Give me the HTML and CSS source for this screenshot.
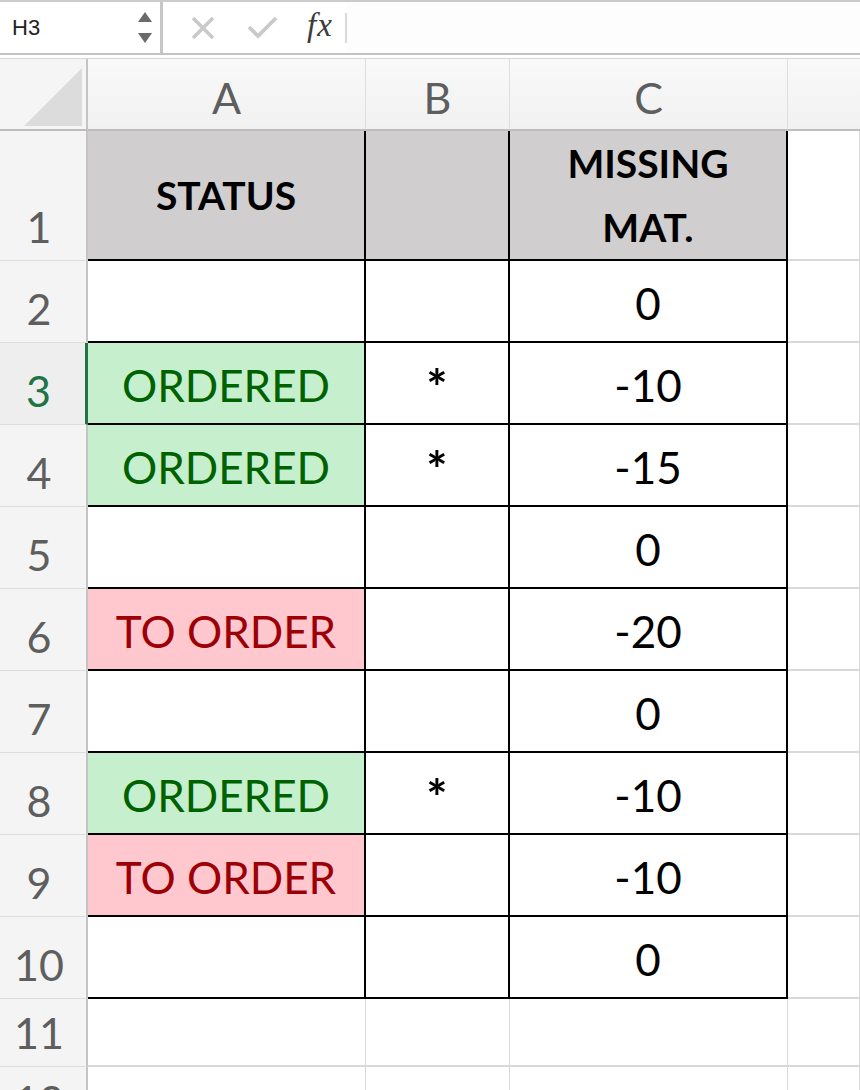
FILE: index.html
```html
<!DOCTYPE html>
<html>
<head>
<meta charset="utf-8">
<link rel="stylesheet" href="styles.css">
</head>
<body>
<div class="fbar">
  <div class="namebox">
    <span class="ref">H3</span>
    <svg class="spin" width="16" height="51" viewBox="0 0 16 51"><polygon points="1,20 15,20 8,10" fill="#6a6a6a"/><polygon points="1,31 15,31 8,41" fill="#6a6a6a"/></svg>
  </div>
  <div class="fbtns">
    <svg class="ico-x" width="24" height="24" viewBox="0 0 24 24"><path d="M2 2 L22 22 M22 2 L2 22" stroke="#c9c9c9" stroke-width="3.6" fill="none"/></svg>
    <svg class="ico-ok" width="31" height="23" viewBox="0 0 31 23"><path d="M2 11 L11 20 L29 2" stroke="#c9c9c9" stroke-width="3.8" fill="none"/></svg>
    <span class="fx">fx</span>
    <span class="fsep"></span>
  </div>
  <div class="finput"></div>
</div>
<div class="sheet">
  <div class="corner"><svg width="86" height="72" viewBox="0 0 86 72"><polygon points="24,67 82,67 82,9" fill="#dcdcdc"/></svg></div>
  <div class="ch">A</div>
  <div class="ch">B</div>
  <div class="ch">C</div>
  <div class="ch last"></div>

  <div class="rh">1</div>
  <div class="c t hd">STATUS</div>
  <div class="c t hd"></div>
  <div class="c t hd">MISSING<br>MAT.</div>
  <div class="c g"></div>

  <div class="rh">2</div>
  <div class="c t"></div>
  <div class="c t"></div>
  <div class="c t">0</div>
  <div class="c g"></div>

  <div class="rh sel">3</div>
  <div class="c t ok">ORDERED</div>
  <div class="c t star">*</div>
  <div class="c t">-10</div>
  <div class="c g"></div>

  <div class="rh">4</div>
  <div class="c t ok">ORDERED</div>
  <div class="c t star">*</div>
  <div class="c t">-15</div>
  <div class="c g"></div>

  <div class="rh">5</div>
  <div class="c t"></div>
  <div class="c t"></div>
  <div class="c t">0</div>
  <div class="c g"></div>

  <div class="rh">6</div>
  <div class="c t no">TO ORDER</div>
  <div class="c t"></div>
  <div class="c t">-20</div>
  <div class="c g"></div>

  <div class="rh">7</div>
  <div class="c t"></div>
  <div class="c t"></div>
  <div class="c t">0</div>
  <div class="c g"></div>

  <div class="rh">8</div>
  <div class="c t ok">ORDERED</div>
  <div class="c t star">*</div>
  <div class="c t">-10</div>
  <div class="c g"></div>

  <div class="rh">9</div>
  <div class="c t no">TO ORDER</div>
  <div class="c t"></div>
  <div class="c t">-10</div>
  <div class="c g"></div>

  <div class="rh">10</div>
  <div class="c t"></div>
  <div class="c t"></div>
  <div class="c t">0</div>
  <div class="c g"></div>

  <div class="rh">11</div>
  <div class="c g"></div>
  <div class="c g"></div>
  <div class="c g"></div>
  <div class="c g"></div>

  <div class="rh">12</div>
  <div class="c g"></div>
  <div class="c g"></div>
  <div class="c g"></div>
  <div class="c g"></div>
</div>
</body>
</html>
```
FILE: styles.css
```css
html, body {
  margin: 0;
  padding: 0;
  width: 860px;
  height: 1090px;
  overflow: hidden;
  background: #ffffff;
}
body {
  font-family: "Lato", "Liberation Sans", sans-serif;
}
.fbar {
  box-sizing: border-box;
  height: 55px;
  border-top: 2px solid #cbcbcb;
  border-bottom: 2px solid #c3c3c3;
  display: flex;
  align-items: stretch;
  background: #ffffff;
}
.namebox {
  box-sizing: border-box;
  width: 163px;
  border-right: 3px solid #c6c6c6;
  display: flex;
  align-items: center;
  justify-content: space-between;
  padding-left: 12px;
  padding-right: 7px;
}
.ref {
  font-family: "Liberation Sans", "Helvetica", sans-serif;
  font-size: 22px;
  color: #222222;
}
.spin {
  display: block;
}
.fbtns {
  display: flex;
  align-items: center;
  padding-left: 28px;
}
.ico-x { display: block; }
.ico-ok { display: block; margin-left: 32px; }
.fx {
  font-family: "Liberation Serif", "Times New Roman", serif;
  font-style: italic;
  font-size: 33px;
  color: #3c3c3c;
  margin-left: 29px;
  margin-top: -4px;
  letter-spacing: 1px;
}
.fsep {
  display: block;
  width: 2px;
  height: 30px;
  background: #dadada;
  margin-left: 12px;
}
.finput {
  flex: 1;
  background: #fdfdfd;
}
.sheet {
  margin-top: 3px;
  border-top: 1px solid #d6d6d6;
  display: grid;
  grid-template-columns: 88px 278px 144px 278px 1fr;
  grid-template-rows: 72px 130px repeat(9, 82px) 68px 68px;
}
.corner {
  box-sizing: border-box;
  background: #f5f5f5;
  border-right: 2px solid #c4c4c4;
  border-bottom: 2px solid #bdbdbd;
}
.corner svg { display: block; }
.ch {
  box-sizing: border-box;
  background: linear-gradient(#f9f9f9, #f1f1f1);
  border-right: 1px solid #dedede;
  border-bottom: 2px solid #bdbdbd;
  color: #5e5e5e;
  font-size: 43px;
  display: flex;
  align-items: center;
  justify-content: center;
  padding-top: 6px;
}
.ch.last { border-right: none; }
.rh {
  box-sizing: border-box;
  background: #f4f4f4;
  border-right: 2px solid #c4c4c4;
  border-bottom: 1px solid #dddddd;
  color: #5e5e5e;
  font-size: 43px;
  line-height: 1;
  display: flex;
  align-items: flex-end;
  justify-content: center;
  padding-right: 8px;
  padding-bottom: 12px;
}
.rh.sel {
  color: #217346;
  background: #eeeeee;
  border-right: 3px solid #217346;
}
.c {
  box-sizing: border-box;
  font-size: 44px;
  line-height: 1;
  color: #000000;
  display: flex;
  align-items: flex-end;
  justify-content: center;
  text-align: center;
  padding-bottom: 16px;
}
.t {
  border-right: 2px solid #000000;
  border-bottom: 2px solid #000000;
}
.g {
  border-right: 1px solid #d9d9d9;
  border-bottom: 2px solid #d9d9d9;
}
.hd {
  background: #d0cece;
  font-weight: 700;
  font-size: 39px;
  line-height: 64px;
  align-items: center;
  padding-bottom: 0;
}
.ok {
  background: #c6efce;
  color: #006100;
}
.no {
  background: #ffc7ce;
  color: #9c0006;
}
.star {
  align-items: flex-start;
  font-weight: 700;
  font-size: 50px;
  padding-top: 19px;
  padding-bottom: 0;
}
```
